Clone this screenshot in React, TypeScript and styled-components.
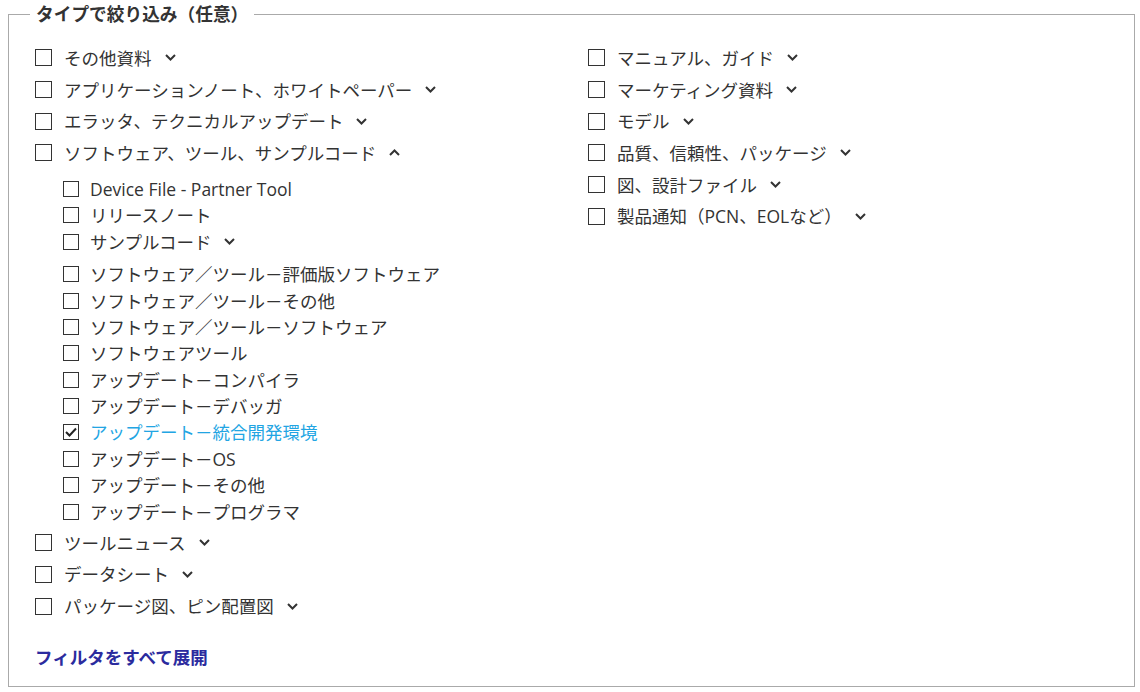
import React from "react";
import styled, { createGlobalStyle } from "styled-components";

const Global = createGlobalStyle`
  html, body { margin: 0; padding: 0; background: #fff; }
  body { font-family: "Open Sans", "Noto Sans CJK JP", sans-serif; color: #333; }
  * { box-sizing: border-box; }
`;

const Page = styled.div`
  padding: 4px 5px 0 8px;
`;

const Fieldset = styled.fieldset`
  margin: 0;
  border: 1px solid #aaa;
  padding: 0 26px 17px 26px;
  min-width: 0;
`;

const Legend = styled.legend`
  font-size: 17.7px;
  font-weight: 700;
  line-height: 20px;
  color: #333;
  padding: 0 6px;
  margin-left: -5px;
`;

const Columns = styled.div`
  display: grid;
  grid-template-columns: 553px 1fr;
  padding-top: 18px;
`;

const List = styled.ul`
  list-style: none;
  margin: 0;
  padding: 0;
`;

const SubList = styled.ul`
  list-style: none;
  margin: 0;
  padding: 7px 0 2px 28px;
`;

const Row = styled.div<{ $sub?: boolean; $extra?: boolean }>`
  display: flex;
  align-items: center;
  height: ${(p) => (p.$sub ? "26.4px" : "31.7px")};
  margin-bottom: ${(p) => (p.$extra ? "6px" : "0")};
  gap: ${(p) => (p.$sub ? "11px" : "12px")};
`;

const Box = styled.span<{ $sub?: boolean }>`
  flex: none;
  width: ${(p) => (p.$sub ? "16px" : "17px")};
  height: ${(p) => (p.$sub ? "16px" : "17px")};
  border: 1.5px solid #333;
  background: #fff;
  display: flex;
  align-items: center;
  justify-content: center;
`;

const Label = styled.span<{ $checked?: boolean }>`
  font-size: 17.5px;
  line-height: 22px;
  white-space: nowrap;
  color: ${(p) => (p.$checked ? "#22a5e3" : "#333")};
`;

const Chevron = styled.svg`
  flex: none;
  margin-left: 1px;
  width: 11px;
  height: 7px;
`;

const LinkText = styled.a`
  display: inline-block;
  margin-top: 23px;
  font-size: 17.5px;
  line-height: 24px;
  font-weight: 700;
  color: #2b2b9e;
  text-decoration: none;
  cursor: pointer;
`;

const Check = () => (
  <svg width="12" height="10" viewBox="0 0 12 10">
    <polyline points="1,5 4.5,8.5 11,1.5" fill="none" stroke="#222" strokeWidth="2" />
  </svg>
);

const Chev = ({ up }: { up?: boolean }) => (
  <Chevron viewBox="0 0 11 7">
    <polyline
      points={up ? "1,6 5.5,1.5 10,6" : "1,1 5.5,5.5 10,1"}
      fill="none"
      stroke="#333"
      strokeWidth="2"
    />
  </Chevron>
);

type ItemProps = {
  label: string;
  sub?: boolean;
  chevron?: "up" | "down";
  checked?: boolean;
  extra?: boolean;
};

const Item = ({ label, sub, chevron, checked, extra }: ItemProps) => (
  <Row $sub={sub} $extra={extra}>
    <Box $sub={sub}>{checked && <Check />}</Box>
    <Label $checked={checked}>{label}</Label>
    {chevron && <Chev up={chevron === "up"} />}
  </Row>
);

const subItems: { label: string; chevron?: "down"; checked?: boolean; extra?: boolean }[] = [
  { label: "Device File - Partner Tool" },
  { label: "リリースノート" },
  { label: "サンプルコード", chevron: "down", extra: true },
  { label: "ソフトウェア／ツール－評価版ソフトウェア" },
  { label: "ソフトウェア／ツール－その他" },
  { label: "ソフトウェア／ツール－ソフトウェア" },
  { label: "ソフトウェアツール" },
  { label: "アップデート－コンパイラ" },
  { label: "アップデート－デバッガ" },
  { label: "アップデート－統合開発環境", checked: true },
  { label: "アップデート－OS" },
  { label: "アップデート－その他" },
  { label: "アップデート－プログラマ" },
];

const rightItems = [
  "マニュアル、ガイド",
  "マーケティング資料",
  "モデル",
  "品質、信頼性、パッケージ",
  "図、設計ファイル",
  "製品通知（PCN、EOLなど）",
];

export default function App() {
  return (
    <Page>
      <Global />
      <Fieldset>
        <Legend>タイプで絞り込み（任意）</Legend>
        <Columns>
          <List>
            <li><Item label="その他資料" chevron="down" /></li>
            <li><Item label="アプリケーションノート、ホワイトペーパー" chevron="down" /></li>
            <li><Item label="エラッタ、テクニカルアップデート" chevron="down" /></li>
            <li>
              <Item label="ソフトウェア、ツール、サンプルコード" chevron="up" />
              <SubList>
                {subItems.map((s) => (
                  <li key={s.label}>
                    <Item label={s.label} sub chevron={s.chevron} checked={s.checked} extra={s.extra} />
                  </li>
                ))}
              </SubList>
            </li>
            <li><Item label="ツールニュース" chevron="down" /></li>
            <li><Item label="データシート" chevron="down" /></li>
            <li><Item label="パッケージ図、ピン配置図" chevron="down" /></li>
          </List>
          <List>
            {rightItems.map((r) => (
              <li key={r}><Item label={r} chevron="down" /></li>
            ))}
          </List>
        </Columns>
        <LinkText>フィルタをすべて展開</LinkText>
      </Fieldset>
    </Page>
  );
}
